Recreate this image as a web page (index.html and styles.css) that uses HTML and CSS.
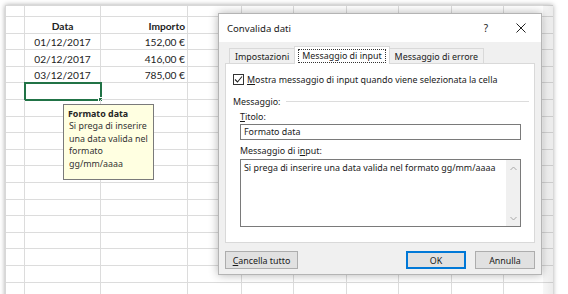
FILE: index.html
```html
<html><head>
<title>Convalida dati</title>
<link rel="stylesheet" href="styles.css">
</head><body>

<div class="sheet">
  <div class="grid">
    <div></div><div></div><div></div><div></div><div></div><div></div><div></div><div></div><div></div><div></div>
    <div></div><div class="mid b">Data</div><div class="num b">Importo</div><div></div><div></div><div></div><div></div><div></div><div></div><div></div>
    <div></div><div class="mid">01/12/2017</div><div class="num">152,00 &euro;</div><div></div><div></div><div></div><div></div><div></div><div></div><div></div>
    <div></div><div class="mid">02/12/2017</div><div class="num">416,00 &euro;</div><div></div><div></div><div></div><div></div><div></div><div></div><div></div>
    <div></div><div class="mid">03/12/2017</div><div class="num">785,00 &euro;</div><div></div><div></div><div></div><div></div><div></div><div></div><div></div>
    <div></div><div class="active"><span class="handle"></span></div><div></div><div></div><div></div><div></div><div></div><div></div><div></div><div></div>
    <div></div><div></div><div></div><div></div><div></div><div></div><div></div><div></div><div></div><div></div>
    <div></div><div></div><div></div><div></div><div></div><div></div><div></div><div></div><div></div><div></div>
    <div></div><div></div><div></div><div></div><div></div><div></div><div></div><div></div><div></div><div></div>
    <div></div><div></div><div></div><div></div><div></div><div></div><div></div><div></div><div></div><div></div>
    <div></div><div></div><div></div><div></div><div></div><div></div><div></div><div></div><div></div><div></div>
    <div></div><div></div><div></div><div></div><div></div><div></div><div></div><div></div><div></div><div></div>
    <div></div><div></div><div></div><div></div><div></div><div></div><div></div><div></div><div></div><div></div>
    <div></div><div></div><div></div><div></div><div></div><div></div><div></div><div></div><div></div><div></div>
    <div></div><div></div><div></div><div></div><div></div><div></div><div></div><div></div><div></div><div></div>
    <div></div><div></div><div></div><div></div><div></div><div></div><div></div><div></div><div></div><div></div>
    <div></div><div></div><div></div><div></div><div></div><div></div><div></div><div></div><div></div><div></div>
    <div></div><div></div><div></div><div></div><div></div><div></div><div></div><div></div><div></div><div></div>
  </div>
  <div class="edge"></div>
</div>

<div class="tip">
  <b>Formato data</b>
  <p>Si prega di inserire una data valida nel formato gg/mm/aaaa</p>
</div>

<div class="dialog">
  <div class="titlebar">
    <span class="title">Convalida dati</span>
    <span class="help">?</span>
    <span class="close"><svg width="10" height="10" viewBox="0 0 10 10"><path d="M0.5 0.5L9.5 9.5M9.5 0.5L0.5 9.5" stroke="#222" stroke-width="1"/></svg></span>
  </div>
  <div class="body">
    <div class="tabs">
      <div class="tab">Impostazioni</div>
      <div class="tab on"><span class="focus">Messaggio di input</span></div>
      <div class="tab">Messaggio di errore</div>
    </div>
    <div class="panel">
      <div class="check">
        <span class="box"><svg width="9" height="9" viewBox="0 0 9 9"><path d="M1 4.5L3.5 7L8 1.5" fill="none" stroke="#222" stroke-width="1.1"/></svg></span>
        <span><u>M</u>ostra messaggio di input quando viene selezionata la cella</span>
      </div>
      <div class="group"><span>Messaggio:</span><span class="rule"></span></div>
      <div class="field">
        <label><u>T</u>itolo:</label>
        <div class="input">Formato data</div>
        <label>Messaggio di i<u>n</u>put:</label>
        <div class="textarea">
          <div class="text">Si prega di inserire una data valida nel formato gg/mm/aaaa</div>
          <div class="scroll">
            <svg width="7" height="5" viewBox="0 0 7 5"><path d="M0.5 4L3.5 1L6.5 4" fill="none" stroke="#a8a8a8"/></svg>
            <svg width="7" height="5" viewBox="0 0 7 5"><path d="M0.5 1L3.5 4L6.5 1" fill="none" stroke="#a8a8a8"/></svg>
          </div>
        </div>
      </div>
    </div>
    <div class="buttons">
      <div class="btn wide"><u>C</u>ancella tutto</div>
      <div class="spacer"></div>
      <div class="btn default">OK</div>
      <div class="btn">Annulla</div>
    </div>
  </div>
</div>

</body></html>
```

FILE: styles.css
```css
body {
  margin:0;
  background-color:#ffffff;
  width:568px;
  height:294px;
  overflow:hidden;
  position:relative;
}
.sheet {
  position:absolute;
  left:5px;
  top:5px;
  width:548px;
  height:300px;
  background-color:#ffffff;
  box-shadow:0 0 5px rgba(0,0,0,0.35);
  overflow:hidden;
}
.grid {
  display:grid;
  grid-template-columns:19px 76px 87px 54px 52px 53px 52px 53px 52px 50px;
  grid-template-rows:11px;
  grid-auto-rows:16.6px;
  border-left:1px solid #d8d8d8;
  border-top:1px solid #d8d8d8;
  font-family:Lato, sans-serif;
  font-size:10.2px;
  color:#222222;
}
.grid div {
  box-sizing:border-box;
  border-right:1px solid #dcdcdc;
  border-bottom:1px solid #dcdcdc;
  display:flex;
  align-items:flex-end;
  padding:0 2px 1px 2px;
  white-space:nowrap;
  position:relative;
}
.grid .mid {
  justify-content:center;
}
.grid .num {
  justify-content:flex-end;
}
.grid .b {
  font-weight:bold;
}
.grid .active {
  outline:2px solid #217346;
  outline-offset:-1px;
}
.handle {
  position:absolute;
  right:-3px;
  bottom:-3px;
  width:5px;
  height:5px;
  background-color:#217346;
  border:1px solid #ffffff;
  box-sizing:border-box;
}
.edge {
  position:absolute;
  right:0;
  top:0;
  width:10px;
  height:100%;
  background:linear-gradient(to right, rgba(0,0,0,0.03), rgba(0,0,0,0.08));
}

.tip {
  position:absolute;
  left:63px;
  top:104px;
  width:91px;
  height:76px;
  box-sizing:border-box;
  background-color:#ffffe1;
  border:1px solid #7a7a7a;
  padding:3px 3px 0 4px;
  font-family:"Noto Sans", sans-serif;
  font-size:8.9px;
  line-height:12.4px;
  color:#333333;
}
.tip b {
  display:block;
  color:#262626;
}
.tip p {
  margin:0 0 0 1px;
}

.dialog {
  position:absolute;
  left:218px;
  top:13px;
  width:324px;
  height:262px;
  box-sizing:border-box;
  border:1px solid #b4b4b4;
  background-color:#f0f0f0;
  box-shadow:0 0 9px rgba(0,0,0,0.3);
  display:flex;
  flex-direction:column;
  font-family:"Noto Sans", sans-serif;
  font-size:8.9px;
  color:#1a1a1a;
}
.titlebar {
  height:28px;
  background-color:#ffffff;
  display:flex;
  align-items:center;
  padding-left:8px;
}
.title {
  flex:1;
  font-size:9.6px;
}
.help {
  width:30px;
  text-align:center;
  font-size:10px;
}
.close {
  width:40px;
  display:flex;
  justify-content:center;
}
.body {
  flex:1;
  display:flex;
  flex-direction:column;
  padding:4px 6px 0 6px;
}
.tabs {
  display:flex;
  align-items:flex-end;
  padding-left:4px;
  height:17px;
}
.tab {
  height:15px;
  box-sizing:border-box;
  border:1px solid #d9d9d9;
  border-bottom:none;
  padding:0 5px;
  display:flex;
  align-items:center;
  background-color:#f0f0f0;
  margin-right:-1px;
}
.tab.on {
  background-color:#ffffff;
  padding:0 3px;
  position:relative;
  z-index:1;
  margin-bottom:-1px;
  height:18px;
}
.focus {
  border:1px dotted #333333;
  padding:0 3px;
  line-height:12px;
}
.panel {
  height:180px;
  box-sizing:border-box;
  background-color:#ffffff;
  border:1px solid #d9d9d9;
  padding:9px 7px 0 7px;
}
.check {
  display:flex;
  align-items:center;
  gap:3px;
  height:12px;
}
.box {
  width:11px;
  height:11px;
  box-sizing:border-box;
  border:1px solid #333333;
  display:flex;
  align-items:center;
  justify-content:center;
}
.group {
  display:flex;
  align-items:center;
  gap:5px;
  margin-top:9px;
  height:14px;
}
.rule {
  flex:1;
  border-top:1px solid #dcdcdc;
  margin-right:-2px;
}
.field {
  padding:0 6px 0 7px;
  display:flex;
  flex-direction:column;
}
.field label {
  height:14px;
  line-height:14px;
  margin-top:2px;
}
.input {
  height:16px;
  box-sizing:border-box;
  border:1px solid #7a7a7a;
  padding:0 3px;
  line-height:14px;
  margin-bottom:2px;
}
.textarea {
  height:68px;
  box-sizing:border-box;
  border:1px solid #7a7a7a;
  display:flex;
  margin-top:1px;
}
.textarea .text {
  flex:1;
  padding:1px 3px;
  line-height:13px;
}
.scroll {
  width:14px;
  background-color:#f0f0f0;
  display:flex;
  flex-direction:column;
  align-items:center;
  justify-content:space-between;
  padding:6px 0 5px 0;
}
.buttons {
  display:flex;
  margin-top:8px;
  gap:9px;
}
.spacer {
  flex:1;
}
.btn {
  width:60px;
  height:18px;
  box-sizing:border-box;
  background-color:#e1e1e1;
  border:1px solid #adadad;
  display:flex;
  align-items:center;
  justify-content:center;
}
.btn.wide {
  width:73px;
}
.btn.default {
  border:2px solid #0078d7;
}
```
